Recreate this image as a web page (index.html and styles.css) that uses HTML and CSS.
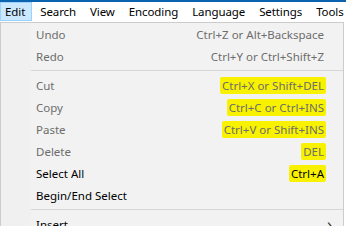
FILE: index.html
```html
<!DOCTYPE html>
<html lang="en">
<head>
    <meta charset="UTF-8">
    <title>Edit menu</title>
    <link rel="stylesheet" href="styles.css">
</head>
<body>
    <div class="menubar">
        <span class="menubar-item active">Edit</span>
        <span class="menubar-item">Search</span>
        <span class="menubar-item">View</span>
        <span class="menubar-item">Encoding</span>
        <span class="menubar-item">Language</span>
        <span class="menubar-item">Settings</span>
        <span class="menubar-item">Tools</span>
    </div>
    <div class="dropdown">
        <div class="menu-item disabled"><span class="label">Undo</span><span class="shortcut">Ctrl+Z or Alt+Backspace</span></div>
        <div class="menu-item disabled"><span class="label">Redo</span><span class="shortcut">Ctrl+Y or Ctrl+Shift+Z</span></div>
        <div class="separator"></div>
        <div class="menu-item disabled"><span class="label">Cut</span><span class="shortcut marked">Ctrl+X or Shift+DEL</span></div>
        <div class="menu-item disabled"><span class="label">Copy</span><span class="shortcut marked">Ctrl+C or Ctrl+INS</span></div>
        <div class="menu-item disabled"><span class="label">Paste</span><span class="shortcut marked">Ctrl+V or Shift+INS</span></div>
        <div class="menu-item disabled"><span class="label">Delete</span><span class="shortcut marked">DEL</span></div>
        <div class="menu-item"><span class="label">Select All</span><span class="shortcut marked">Ctrl+A</span></div>
        <div class="menu-item"><span class="label">Begin/End Select</span><span class="shortcut"></span></div>
        <div class="separator"></div>
        <div class="menu-item"><span class="label">Insert</span><span class="arrow">&#8250;</span></div>
    </div>
</body>
</html>
```
FILE: styles.css
```css
body {
    margin: 0;
    font-family: "Noto Sans", "Open Sans", sans-serif;
    font-size: 11.5px;
    background: #fff;
    overflow: hidden;
}

.menubar {
    border-top: 2px solid #0b63b0;
    height: 19px;
    display: flex;
    align-items: stretch;
    background: #fff;
    white-space: nowrap;
}

.menubar-item {
    display: flex;
    align-items: center;
    padding: 0 6px 0 7px;
    margin-right: 1px;
    color: #000;
    line-height: 1;
    letter-spacing: -0.1px;
}

.menubar-item.active {
    background: #cce8ff;
    border: 1px solid #99d1ff;
    padding: 0 6px 0 4px;
}

.dropdown {
    margin-top: 1px;
    width: 344px;
    box-sizing: border-box;
    height: 210px;
    border: 1px solid #cccccc;
    border-bottom: none;
    background: linear-gradient(to right, #f0f0f0 0, #f0f0f0 30px, #f2f2f2 30px);
    padding-top: 0;
}

.menu-item {
    display: flex;
    align-items: center;
    height: 22px;
    padding: 0 17px 0 35px;
    color: #000;
    white-space: nowrap;
}

.menu-item.disabled {
    color: #6d6d6d;
}

.label {
    flex: 1;
}

.shortcut {
    padding: 1px 2px;
}

.marked {
    background: #f8f200;
    border-radius: 2px;
}

.menu-item:not(.disabled) .marked {
    color: #000;
}

.arrow {
    font-size: 16px;
    color: #333;
    margin-right: -6px;
}

.separator {
    height: 1px;
    background: #d7d7d7;
    margin: 3px 0 3px 30px;
}
```
